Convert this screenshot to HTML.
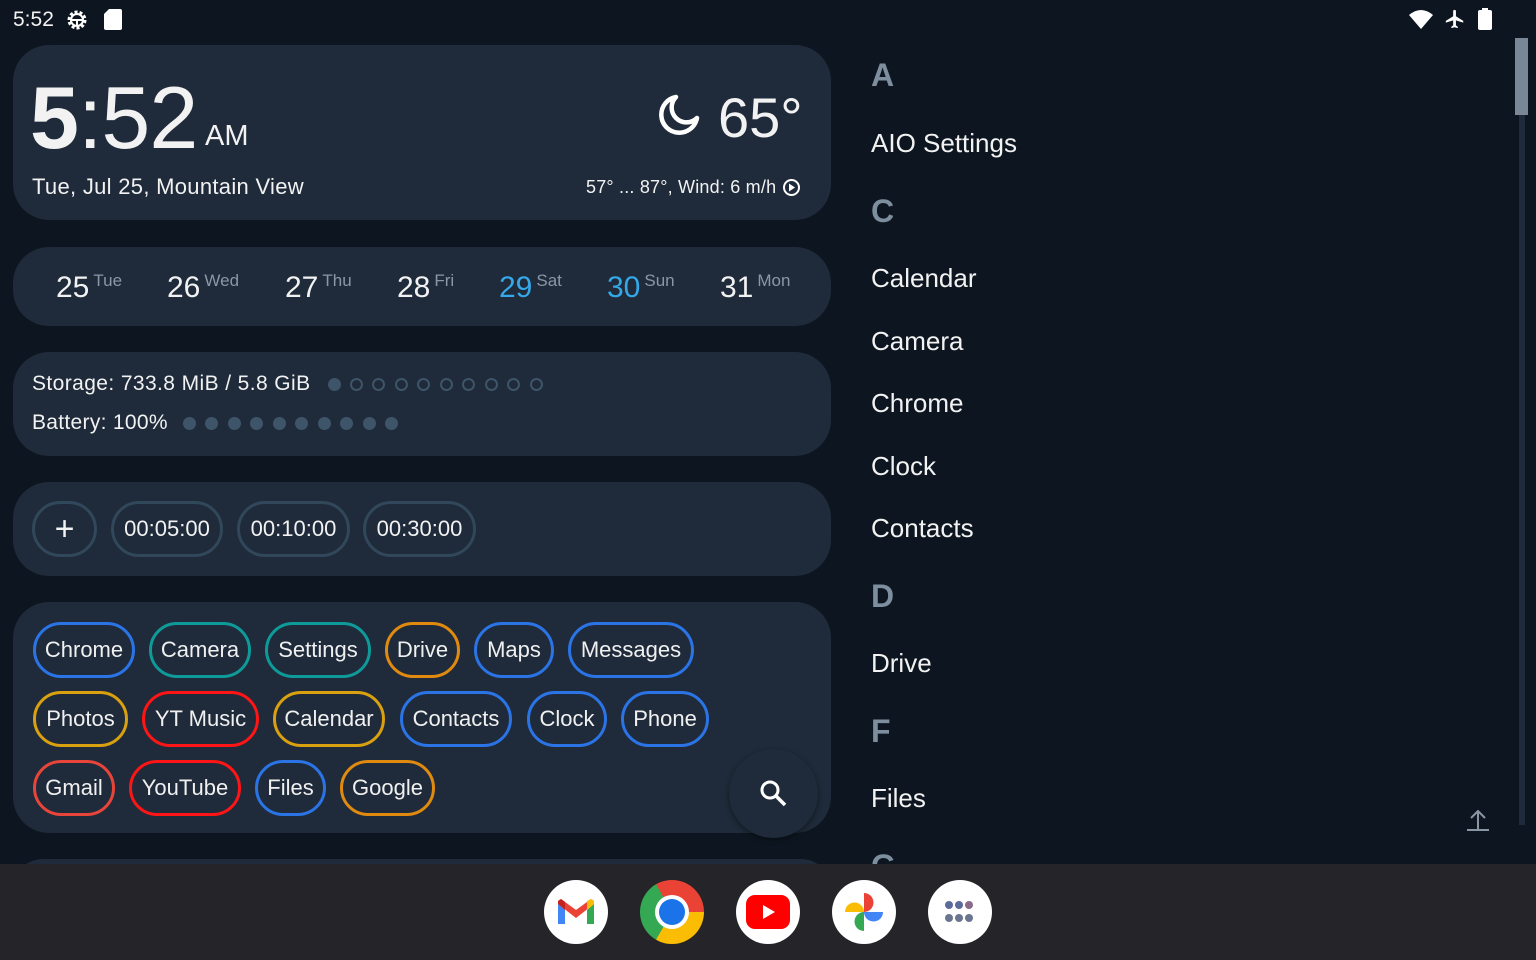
<!DOCTYPE html>
<html><head><meta charset="utf-8"><style>
*{margin:0;padding:0;box-sizing:border-box}
body{width:1536px;height:960px;background:#0d1620;font-family:"Liberation Sans",sans-serif;color:#f2f2f2;position:relative;overflow:hidden}
.a{position:absolute;white-space:nowrap}
.card{position:absolute;left:13px;width:818px;background:#1f2b3a;border-radius:36px}
.day{position:absolute;top:271px;font-size:30px;color:#f2f2f2}
.day sup{font-size:17px;color:#8a97a5;vertical-align:top;position:relative;top:0px;margin-left:4px}
.day.b{color:#35a8e8}
.dot{position:absolute;width:13px;height:13px;border-radius:50%}
.f{background:#3e5468}.o{border:2px solid #3e5468}
.tm{position:absolute;top:501px;height:56px;border:3px solid #31475a;border-radius:28px;font-size:22px;display:flex;align-items:center;justify-content:center}
.chip{position:absolute;height:56px;border:3px solid;border-radius:28px;font-size:22px;display:flex;align-items:center;justify-content:center;color:#f0f0f0}
.B{border-color:#2a74e6}.T{border-color:#0f9a9a}.O{border-color:#e08a10}.Y{border-color:#d9a010}.R{border-color:#ff1515}.G{border-color:#e8453a}
.L{position:absolute;left:871px;font-size:32px;font-weight:bold;color:#7d8e9e}
.I{position:absolute;left:871px;font-size:26px;color:#f2f2f2}
.dk{position:absolute;top:880px;width:64px;height:64px;border-radius:50%;background:#fff}
</style></head><body>
<div class="a" style="left:13px;top:8px;font-size:21px">5:52</div>
<svg class="a" style="left:65px;top:8px" width="24" height="24" viewBox="0 0 24 24"><circle cx="12" cy="12" r="8" fill="none" stroke="#fff" stroke-width="3" stroke-dasharray="3 2"/><circle cx="12" cy="12" r="6" fill="none" stroke="#fff" stroke-width="2"/><path d="M6 12h12M12 12v6" stroke="#fff" stroke-width="2"/></svg>
<svg class="a" style="left:104px;top:9px" width="18" height="21" viewBox="0 0 18 21"><path d="M5 0h11a2 2 0 0 1 2 2v17a2 2 0 0 1-2 2H2a2 2 0 0 1-2-2V5z" fill="#fff"/></svg>
<svg class="a" style="left:1409px;top:9px" width="24" height="20" viewBox="0 0 24 20"><path d="M0 6Q12-4 24 6L12 20z" fill="#fff"/></svg>
<svg class="a" style="left:1444px;top:8px" width="22" height="22" viewBox="0 0 24 24"><path d="M21 16v-2l-8-5V3.5a1.5 1.5 0 0 0-3 0V9l-8 5v2l8-2.5V19l-2 1.5V22l3.5-1 3.5 1v-1.5L13 19v-5.5z" fill="#fff"/></svg>
<svg class="a" style="left:1478px;top:8px" width="14" height="22" viewBox="0 0 14 22"><rect x="4" y="0" width="6" height="3" fill="#fff"/><rect x="0" y="2" width="14" height="20" rx="2" fill="#fff"/></svg>

<div class="card" style="top:45px;height:175px"></div>
<div class="a" style="left:30px;top:74px;font-size:88px;line-height:88px;letter-spacing:-1px;font-weight:300"><b style="font-weight:700">5</b>:52</div>
<div class="a" style="left:205px;top:120px;font-size:29px">AM</div>
<div class="a" style="left:32px;top:174px;font-size:22px;letter-spacing:0.3px">Tue, Jul 25, Mountain View</div>
<svg class="a" style="left:656px;top:92px" width="46" height="46" viewBox="0 0 46 46"><path d="M20 5A18 18 0 1 0 41 26 10 10 0 0 1 20 5z" fill="none" stroke="#fff" stroke-width="4.5" stroke-linejoin="round"/></svg>
<div class="a" style="left:718px;top:85px;font-size:56px;font-weight:300">65°</div>
<div class="a" style="left:586px;top:177px;font-size:18px;letter-spacing:0.2px">57° ... 87°, Wind: 6 m/h</div>
<svg class="a" style="left:782px;top:178px" width="19" height="19" viewBox="0 0 19 19"><circle cx="9.5" cy="9.5" r="7.5" fill="none" stroke="#fff" stroke-width="2"/><path d="M7 5.5l6 4-6 4z" fill="#fff"/></svg>

<div class="card" style="top:247px;height:79px"></div>
<div class="day" style="left:56px">25<sup>Tue</sup></div>
<div class="day" style="left:167px">26<sup>Wed</sup></div>
<div class="day" style="left:285px">27<sup>Thu</sup></div>
<div class="day" style="left:397px">28<sup>Fri</sup></div>
<div class="day b" style="left:499px">29<sup>Sat</sup></div>
<div class="day b" style="left:607px">30<sup>Sun</sup></div>
<div class="day" style="left:720px">31<sup>Mon</sup></div>

<div class="card" style="top:352px;height:104px"></div>
<div class="a" style="left:32px;top:372px;font-size:21px;letter-spacing:0.4px">Storage: 733.8 MiB / 5.8 GiB</div>
<div class="a" style="left:32px;top:411px;font-size:21px;letter-spacing:0.3px">Battery: 100%</div>
<div class="dot f" style="left:328px;top:378px"></div>
<div class="dot o" style="left:350px;top:378px"></div><div class="dot o" style="left:372px;top:378px"></div><div class="dot o" style="left:395px;top:378px"></div><div class="dot o" style="left:417px;top:378px"></div><div class="dot o" style="left:440px;top:378px"></div><div class="dot o" style="left:462px;top:378px"></div><div class="dot o" style="left:485px;top:378px"></div><div class="dot o" style="left:507px;top:378px"></div><div class="dot o" style="left:530px;top:378px"></div>
<div class="dot f" style="left:183px;top:417px"></div><div class="dot f" style="left:205px;top:417px"></div><div class="dot f" style="left:228px;top:417px"></div><div class="dot f" style="left:250px;top:417px"></div><div class="dot f" style="left:273px;top:417px"></div><div class="dot f" style="left:295px;top:417px"></div><div class="dot f" style="left:318px;top:417px"></div><div class="dot f" style="left:340px;top:417px"></div><div class="dot f" style="left:363px;top:417px"></div><div class="dot f" style="left:385px;top:417px"></div>

<div class="card" style="top:482px;height:94px"></div>
<div class="tm" style="left:32px;width:65px;font-size:34px;font-weight:300">+</div>
<div class="tm" style="left:111px;width:112px">00:05:00</div>
<div class="tm" style="left:237px;width:113px">00:10:00</div>
<div class="tm" style="left:363px;width:113px">00:30:00</div>

<div class="card" style="top:602px;height:231px"></div>
<div class="chip B" style="left:33px;top:622px;width:102px">Chrome</div>
<div class="chip T" style="left:149px;top:622px;width:102px">Camera</div>
<div class="chip T" style="left:265px;top:622px;width:106px">Settings</div>
<div class="chip O" style="left:385px;top:622px;width:75px">Drive</div>
<div class="chip B" style="left:474px;top:622px;width:80px">Maps</div>
<div class="chip B" style="left:568px;top:622px;width:126px">Messages</div>
<div class="chip Y" style="left:33px;top:691px;width:95px">Photos</div>
<div class="chip R" style="left:142px;top:691px;width:117px">YT Music</div>
<div class="chip Y" style="left:273px;top:691px;width:112px">Calendar</div>
<div class="chip B" style="left:400px;top:691px;width:112px">Contacts</div>
<div class="chip B" style="left:527px;top:691px;width:80px">Clock</div>
<div class="chip B" style="left:621px;top:691px;width:88px">Phone</div>
<div class="chip G" style="left:33px;top:760px;width:82px">Gmail</div>
<div class="chip R" style="left:129px;top:760px;width:112px">YouTube</div>
<div class="chip B" style="left:255px;top:760px;width:71px">Files</div>
<div class="chip O" style="left:340px;top:760px;width:95px">Google</div>
<div class="a" style="left:729px;top:749px;width:89px;height:89px;border-radius:50%;background:#1f2b3a;box-shadow:0 2px 6px rgba(0,0,0,.45)"></div>
<svg class="a" style="left:758px;top:778px" width="32" height="32" viewBox="0 0 32 32"><circle cx="12" cy="12" r="8" fill="none" stroke="#fff" stroke-width="3"/><path d="M18 18l9 9" stroke="#fff" stroke-width="3.5"/></svg>

<div class="card" style="top:859px;height:60px"></div>

<div class="L" style="top:57px">A</div>
<div class="I" style="top:128px">AIO Settings</div>
<div class="L" style="top:193px">C</div>
<div class="I" style="top:263px">Calendar</div>
<div class="I" style="top:326px">Camera</div>
<div class="I" style="top:388px">Chrome</div>
<div class="I" style="top:451px">Clock</div>
<div class="I" style="top:513px">Contacts</div>
<div class="L" style="top:578px">D</div>
<div class="I" style="top:648px">Drive</div>
<div class="L" style="top:713px">F</div>
<div class="I" style="top:783px">Files</div>
<div class="L" style="top:848px">G</div>
<div class="a" style="left:1519px;top:38px;width:6px;height:787px;background:#1f2b3a"></div>
<div class="a" style="left:1515px;top:38px;width:13px;height:77px;background:#7a8796"></div>
<svg class="a" style="left:1466px;top:808px" width="24" height="24" viewBox="0 0 24 24"><path d="M12 22V3M5 10l7-7 7 7M1 22h22" fill="none" stroke="#8a96a3" stroke-width="2"/></svg>

<div class="a" style="left:0;top:864px;width:1536px;height:96px;background:#252429"></div>
<div class="dk" style="left:544px"></div>
<svg class="a" style="left:554px;top:890px" width="44" height="44" viewBox="0 0 44 44"><path d="M4 14v20h7V20z" fill="#4285f4"/><path d="M33 20v14h7V14z" fill="#34a853"/><path d="M4 14l18 14 18-14v-3l-3-2-15 11L7 9 4 11z" fill="#ea4335"/><path d="M33 11l4-2 3 2v3l-7 6z" fill="#fbbc04"/><path d="M4 11l3-2 4 3v8L4 14z" fill="#c5221f"/></svg>
<div class="dk" style="left:640px;background:conic-gradient(from 90deg,#fbbc04 0 120deg,#34a853 120deg 240deg,#ea4335 240deg 360deg)"></div>
<div class="a" style="left:655px;top:895px;width:34px;height:34px;border-radius:50%;background:#fff"></div>
<div class="a" style="left:659px;top:899px;width:26px;height:26px;border-radius:50%;background:#1a73e8"></div>
<div class="dk" style="left:736px"></div>
<div class="a" style="left:746px;top:895px;width:44px;height:34px;border-radius:9px;background:#ff0000"></div>
<svg class="a" style="left:760px;top:903px" width="18" height="18" viewBox="0 0 18 18"><path d="M3 2l12 7-12 7z" fill="#fff"/></svg>
<div class="dk" style="left:832px"></div>
<svg class="a" style="left:840px;top:888px" width="48" height="48" viewBox="0 0 48 48"><path d="M24 24V5a9.5 9.5 0 0 1 0 19z" fill="#ea4335"/><path d="M24 24h19a9.5 9.5 0 0 1-19 0z" fill="#4285f4"/><path d="M24 24v19a9.5 9.5 0 0 1 0-19z" fill="#34a853"/><path d="M24 24H5a9.5 9.5 0 0 1 19 0z" fill="#fbbc04"/></svg>
<div class="dk" style="left:928px"></div>
<svg class="a" style="left:944px;top:899px" width="32" height="26" viewBox="0 0 32 26"><g fill="#5c6b9a"><circle cx="5" cy="6" r="4"/><circle cx="15" cy="6" r="4"/><circle cx="25" cy="6" r="4" fill="#8a6a88"/><circle cx="5" cy="19" r="4" fill="#6a7590"/><circle cx="15" cy="19" r="4" fill="#6a7590"/><circle cx="25" cy="19" r="4" fill="#6a7590"/></g></svg>
</body></html>
